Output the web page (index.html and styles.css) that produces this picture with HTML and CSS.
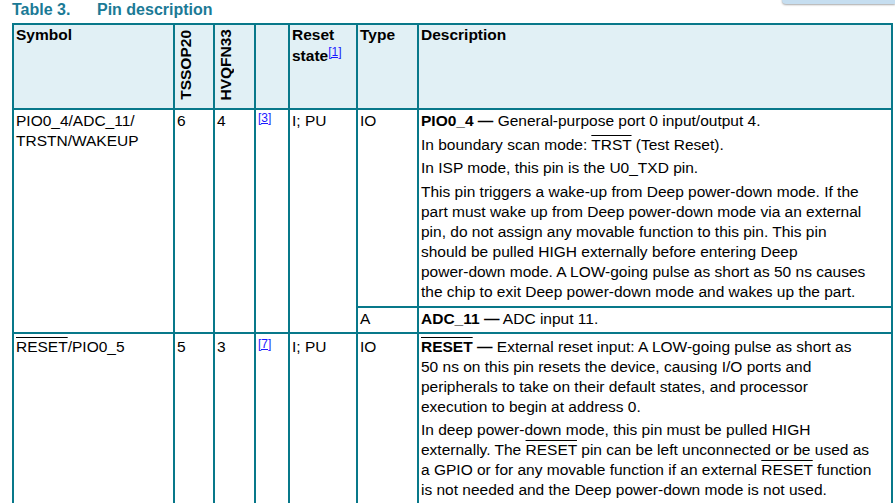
FILE: index.html
```html
<!DOCTYPE html>
<html>
<head>
<meta charset="utf-8">
<link rel="stylesheet" href="styles.css">
</head>
<body>
<div class="tab-tag"></div>
<div class="page">
  <div class="caption"><span class="cap-num">Table 3.</span><span class="cap-title">Pin description</span></div>
  <table class="pins">
    <colgroup>
      <col class="c-sym"><col class="c-pkg"><col class="c-pkg2"><col class="c-note"><col class="c-reset"><col class="c-type"><col class="c-desc">
    </colgroup>
    <thead>
      <tr>
        <th class="thin-r">Symbol</th>
        <th class="rot thin-r"><span>TSSOP20</span></th>
        <th class="rot"><span>HVQFN33</span></th>
        <th></th>
        <th class="thin-r">Reset state<a class="fn" href="#">[1]</a></th>
        <th>Type</th>
        <th>Description</th>
      </tr>
    </thead>
    <tbody>
      <tr class="major">
        <td rowspan="2" class="thin-r">PIO0_4/ADC_11/<br>TRSTN/WAKEUP</td>
        <td rowspan="2" class="thin-r">6</td>
        <td rowspan="2">4</td>
        <td rowspan="2"><a class="fn" href="#">[3]</a></td>
        <td rowspan="2" class="thin-r">I; PU</td>
        <td class="sub">IO</td>
        <td class="desc sub first">
          <p><b>PIO0_4 —</b> General-purpose port 0 input/output 4.</p>
          <p>In boundary scan mode: <span class="ov">TRST</span> (Test Reset).</p>
          <p>In ISP mode, this pin is the U0_TXD pin.</p>
          <p>This pin triggers a wake-up from Deep power-down mode. If the<br>part must wake up from Deep power-down mode via an external<br>pin, do not assign any movable function to this pin. This pin<br>should be pulled HIGH externally before entering Deep<br>power-down mode. A LOW-going pulse as short as 50 ns causes<br>the chip to exit Deep power-down mode and wakes up the part.</p>
        </td>
      </tr>
      <tr>
        <td class="sub">A</td>
        <td class="desc sub"><p><b>ADC_11 —</b> ADC input 11.</p></td>
      </tr>
      <tr class="major">
        <td rowspan="2" class="thin-r lower"><span class="ov">RESET</span>/PIO0_5</td>
        <td rowspan="2" class="thin-r lower">5</td>
        <td rowspan="2" class="lower">3</td>
        <td rowspan="2" class="lower"><a class="fn" href="#">[7]</a></td>
        <td rowspan="2" class="thin-r lower">I; PU</td>
        <td class="sub lower">IO</td>
        <td class="desc sub lower">
          <p><b class="ov">RESET</b> <b>—</b> External reset input: A LOW-going pulse as short as<br>50 ns on this pin resets the device, causing I/O ports and<br>peripherals to take on their default states, and processor<br>execution to begin at address 0.</p>
          <p>In deep power-down mode, this pin must be pulled HIGH<br>externally. The <span class="ov">RESET</span> pin can be left unconnected or be used as<br>a GPIO or for any movable function if an external <span class="ov">RESET</span> function<br>is not needed and the Deep power-down mode is not used.</p>
        </td>
      </tr>
      <tr>
        <td>I</td>
        <td class="desc"><p><b>PIO0_5 —</b> General-purpose port 0 input/output 5.</p></td>
      </tr>
    </tbody>
  </table>
</div>
</body>
</html>
```

FILE: styles.css
```css
html, body {
  margin: 0;
  padding: 0;
  background: #ffffff;
  overflow: hidden;
}
body {
  font-family: "Liberation Sans", Arial, sans-serif;
  color: #000;
}
.page {
  padding: 0 0 0 12px;
}
.tab-tag {
  position: absolute;
  top: -8px;
  right: 0;
  width: 113px;
  height: 12px;
  background: #c6def0;
  border-bottom-left-radius: 4px;
  box-shadow: 0 1px 2px rgba(0, 0, 0, 0.35);
}
.caption {
  font-weight: bold;
  font-size: 16px;
  line-height: 20px;
  color: #1b7a96;
  height: 20px;
  margin-bottom: 3px;
}
.cap-num {
  display: inline-block;
  width: 85px;
}
.pins {
  border-collapse: collapse;
  table-layout: fixed;
  width: 879px;
  font-size: 15.5px;
  line-height: 20px;
  border: 2px solid #08788a;
}
.c-sym { width: 161px; }
.c-pkg { width: 40px; }
.c-pkg2 { width: 41px; }
.c-note { width: 34px; }
.c-reset { width: 68px; }
.c-type { width: 61px; }
.c-desc { width: 474px; }

.pins th, .pins td {
  border: 2px solid #08788a;
  vertical-align: top;
  text-align: left;
  padding: 1px 2px 3px 2px;
}
.pins th.thin-r, .pins td.thin-r {
  border-right-width: 1px;
}
.pins thead th {
  background: #e1f0f5;
  font-weight: bold;
  height: 80px;
  padding-top: 0;
}
.pins th.rot {
  vertical-align: bottom;
  padding-bottom: 3px;
  padding-left: 3px;
}
.pins th.rot span {
  display: inline-block;
  writing-mode: vertical-rl;
  transform: rotate(180deg);
  line-height: 16px;
}
.pins td.sub {
  border-bottom-width: 1px;
}
.pins td.lower {
  padding-top: 3px;
}
.desc p {
  margin: 0 0 3.5px;
  white-space: nowrap;
}
.desc p:last-child {
  margin-bottom: 0;
}
.desc.first {
  padding-bottom: 4px;
}
.fn {
  font-size: 12px;
  color: #1a1aff;
  text-decoration: underline;
  vertical-align: top;
  line-height: 14px;
  font-weight: normal;
}
th .fn {
  vertical-align: 5px;
}
.ov {
  text-decoration: overline;
}
```
